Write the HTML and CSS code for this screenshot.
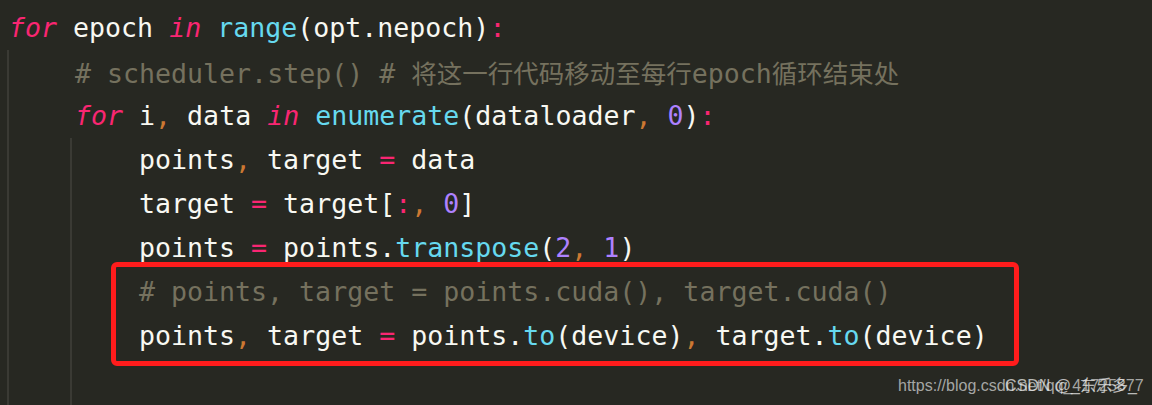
FILE: index.html
```html
<!DOCTYPE html>
<html lang="zh-CN">
<head>
<meta charset="utf-8">
<title>code</title>
<link rel="stylesheet" href="styles.css">
</head>
<body>
<div class="editor">
  <div class="line top"><span class="kw">for</span> epoch <span class="kw">in</span> <span class="fn">range</span>(opt.nepoch)<span class="op">:</span></div>
  <div class="block b1">
    <div class="line l1"><span class="cm"># scheduler.step() # <span class="cjk">将这一行代码移动至每行</span>epoch<span class="cjk">循环结束处</span></span></div>
    <div class="line l1"><span class="kw">for</span> i<span class="cma">,</span> data <span class="kw">in</span> <span class="fn">enumerate</span>(dataloader<span class="cma">,</span> <span class="num">0</span>)<span class="op">:</span></div>
    <div class="block b2">
      <div class="line l2">points<span class="cma">,</span> target <span class="op">=</span> data</div>
      <div class="line l2">target <span class="op">=</span> target[<span class="op">:</span><span class="cma">,</span> <span class="num">0</span>]</div>
      <div class="line l2">points <span class="op">=</span> points.<span class="fn">transpose</span>(<span class="num">2</span><span class="cma">,</span> <span class="num">1</span>)</div>
      <div class="mark">
        <div class="line lm"><span class="cm"># points, target = points.cuda(), target.cuda()</span></div>
        <div class="line lm">points<span class="cma">,</span> target <span class="op">=</span> points.<span class="fn">to</span>(device)<span class="cma">,</span> target.<span class="fn">to</span>(device)</div>
      </div>
    </div>
  </div>
  <div class="wm"><span class="wm-a">https://blog.csdn.net/qq_41725877</span><span class="wm-b">CSDN @_东乐多_</span></div>
</div>
</body>
</html>
```
FILE: styles.css
```css
html, body {
  margin: 0;
  padding: 0;
  background: #272822;
}
.editor {
  position: relative;
  width: 1152px;
  height: 405px;
  overflow: hidden;
  background: #272822;
  box-sizing: border-box;
  padding-top: 6px;
  display: flex;
  flex-direction: column;
  font-family: "DejaVu Sans Mono", "Noto Sans CJK SC", monospace;
  font-size: 26.6px;
  color: #f8f8f2;
}
.line {
  height: 44px;
  line-height: 44px;
  white-space: pre;
}
.top { padding-left: 9px; }
.block {
  display: flex;
  flex-direction: column;
  flex: 1;
  border-left: 2px solid #3a3a34;
}
.b1 { margin-left: 7px; }
.l1 { padding-left: 66px; }
.b2 { margin-left: 61px; }
.l2 { padding-left: 67px; }
.mark {
  margin: -8px 0 0 39px;
  width: 908px;
  height: 104px;
  box-sizing: border-box;
  padding-top: 3px;
  border: 5px solid #ff1c1c;
  border-radius: 6px;
}
.lm { padding-left: 23px; }
.kw { color: #f92672; font-style: italic; }
.fn { color: #66d9ef; }
.num { color: #ae81ff; }
.op { color: #f92672; }
.cma { color: #cc7832; }
.cm { color: #75715e; }
.cjk { font-family: "Noto Sans CJK SC", sans-serif; font-size: 25.5px; }
.wm {
  position: absolute;
  left: 898px;
  top: 376px;
  font-family: "Liberation Sans", Arial, sans-serif;
  font-size: 16px;
  line-height: 20px;
  white-space: nowrap;
}
.wm-a { color: rgba(200, 200, 200, 0.8); }
.wm-b {
  position: absolute;
  left: 107px;
  top: 0;
  color: rgba(235, 235, 235, 0.75);
}
```
